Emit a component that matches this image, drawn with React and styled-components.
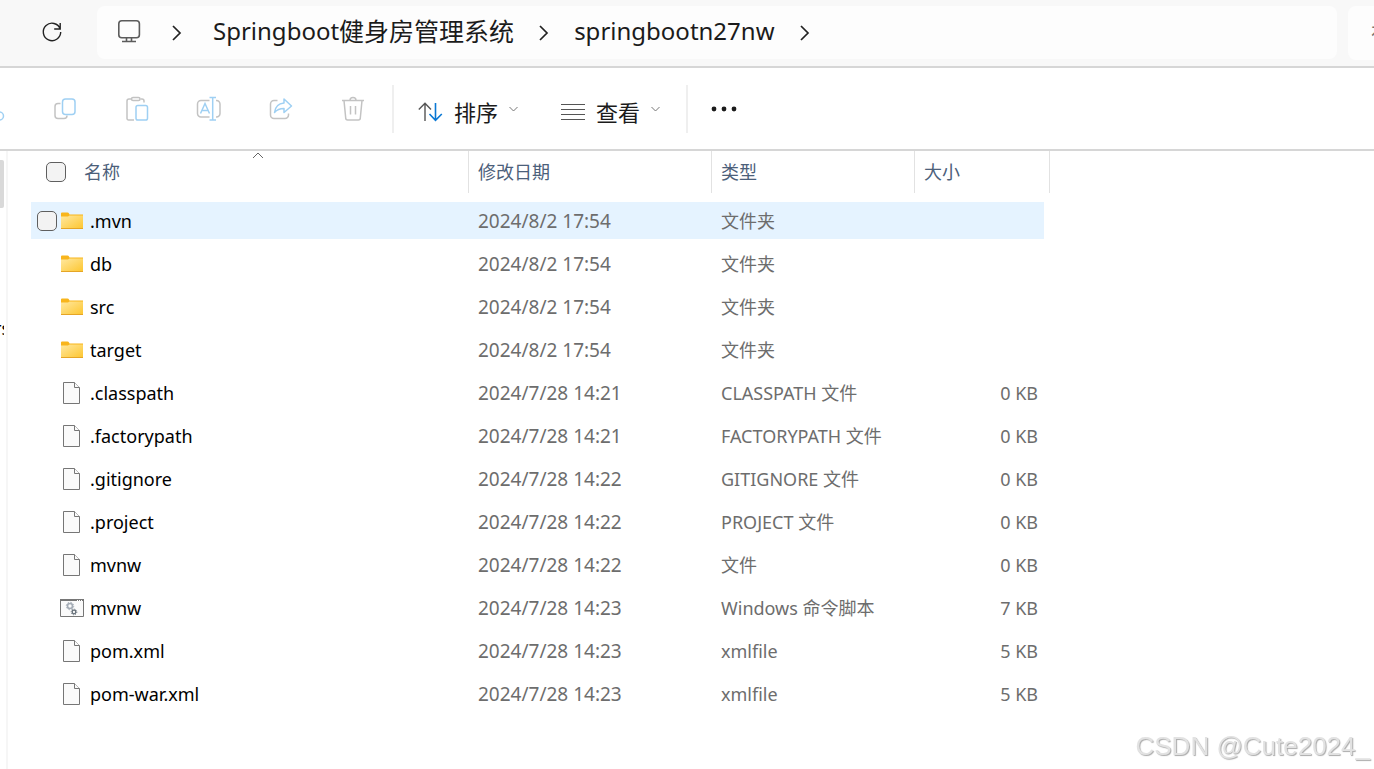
import React from "react";
import styled, { createGlobalStyle } from "styled-components";

const GlobalStyle = createGlobalStyle`
  *, *::before, *::after { box-sizing: border-box; }
  body {
    margin: 0;
    background: #fff;
    color: #1b1b1b;
    font-family: "Noto Sans", "Noto Sans CJK SC", sans-serif;
    overflow-x: hidden;
  }
  button, input { font: inherit; color: inherit; }
`;

const Window = styled.div`
  display: flex;
  flex-direction: column;
  min-height: 100vh;
  overflow: hidden;
`;

const AddressBar = styled.header`
  display: flex;
  align-items: flex-start;
  height: 68px;
  padding-top: 6px;
  background: #f8f8f8;
  border-bottom: 2px solid #d6d6d6;
`;

const PlainButton = styled.button`
  display: flex;
  align-items: center;
  justify-content: center;
  padding: 0;
  border: 0;
  background: none;
`;

const RefreshButton = styled(PlainButton)`
  width: 24px;
  height: 52px;
  margin: 0 33px 0 40px;
`;

const Breadcrumbs = styled.nav`
  display: flex;
  align-items: center;
  flex: 1;
  height: 53px;
  padding: 0 0 3px 20px;
  border-radius: 8px;
  background: #fdfdfd;
`;

const Crumb = styled.a`
  display: flex;
  align-items: center;
  color: #1b1b1b;
  font-size: 24px;
  line-height: 32px;
  text-decoration: none;
  white-space: nowrap;
`;

const CjkText = styled.span`
  font-size: 25px;
`;

const CrumbArrow = styled(PlainButton)`
  width: ${(p) => p.$width || "60px"};
  height: 40px;
  padding-top: 3px;
`;

const SearchBox = styled.input`
  width: 26px;
  height: 54px;
  margin-left: 11px;
  padding: 0 0 0 23px;
  border: 0;
  border-radius: 8px 0 0 8px;
  background: #fdfdfd;
  font-size: 20px;
`;

const Toolbar = styled.div`
  display: flex;
  align-items: center;
  height: 83px;
  border-bottom: 2px solid #d6d6d6;
`;

const IconButton = styled(PlainButton)`
  flex: none;
  width: 72px;
  height: 48px;
`;

const IconGroup = styled.div`
  display: flex;
  margin-left: -43px;
`;

const Divider = styled.span`
  width: 2px;
  height: 48px;
  margin-left: ${(p) => p.$gap};
  background: #efefef;
`;

const MenuButton = styled(PlainButton)`
  gap: 11px;
  height: 48px;
  margin-left: ${(p) => p.$gap};
  padding-top: 6px;
  font-size: 22px;
  line-height: 32px;
`;

const Body = styled.div`
  display: flex;
  flex: 1;
`;

const Sidebar = styled.aside`
  display: flex;
  flex-direction: column;
  flex: none;
  width: 8px;
  padding-top: 9px;
  border-right: 2px solid #f6f6f6;
  overflow: hidden;
`;

const ScrollThumb = styled.span`
  width: 4px;
  height: 48px;
  border-radius: 0 2px 2px 0;
  background: #d9d9d9;
`;

const TreeLabel = styled.span`
  display: flex;
  justify-content: center;
  width: 4px;
  margin-top: 108px;
  overflow: hidden;
  color: #000;
  font-size: 18px;
  line-height: 24px;
`;

const FileTable = styled.table`
  flex: none;
  align-self: flex-start;
  width: 1019px;
  margin-left: 23px;
  border-collapse: separate;
  border-spacing: 0;
  table-layout: fixed;
  text-align: left;
`;

const Column = styled.col`
  width: ${(p) => p.$width};
`;

const HeadCell = styled.th`
  height: 48px;
  padding: 0;
  vertical-align: top;
  color: #4c607a;
  font-size: 18px;
  font-weight: 400;
  line-height: 24px;
`;

const HeadContent = styled.div`
  position: relative;
  display: flex;
  align-items: center;
  gap: 18px;
  height: 42px;
  padding-left: ${(p) => p.$inset || "9px"};
  border-right: 1px solid #e2e2e2;
`;

const SortMark = styled.svg`
  position: absolute;
  top: 0;
  left: calc(50% + 2px);
`;

const Check = styled.input`
  appearance: none;
  flex: none;
  width: 20px;
  height: 20px;
  margin: 0;
  border: 1px solid #5f5f5f;
  border-radius: 5px;
  background: #f3f3f3;
`;

const Cell = styled.td`
  height: 43px;
  padding: 0 6px 0 9px;
  border: solid transparent;
  border-width: 3px 0;
  background: ${(p) => (p.$active ? "#e5f3ff" : "transparent")};
  background-clip: padding-box;
  color: #6d6d6d;
  font-size: ${(p) => p.$size || "18px"};
  line-height: 24px;
  text-align: ${(p) => (p.$end ? "right" : "left")};
  white-space: nowrap;
`;

const NameContent = styled.div`
  display: grid;
  grid-template-columns: 20px 24px 1fr;
  align-items: center;
  column-gap: 3px;
  margin-left: -3px;
  color: #000;
`;

const FileName = styled.label`
  grid-column: 3;
  margin-left: 3px;
`;

const IconSlot = styled.span`
  display: flex;
  grid-column: 2;
  justify-content: center;
`;

const Watermark = styled.div`
  position: fixed;
  right: 4px;
  bottom: 7px;
  color: #e2e2e2;
  font-family: "Liberation Sans", sans-serif;
  font-size: 26px;
  line-height: 32px;
  text-shadow: 1px 1px 1px #aaa;
`;

const Refresh = () => (
  <svg width="24" height="24" viewBox="0 0 24 24" fill="none" stroke="#222" strokeWidth="1.4">
    <path d="M20.2 9A8.7 8.7 0 1 0 20.7 12M20.2 3v6h-6" />
  </svg>
);

const Monitor = () => (
  <svg width="24" height="24" viewBox="0 0 24 24" fill="none" stroke="#5c5c5c" strokeWidth="1.6">
    <rect x="1.8" y="1.8" width="20.6" height="17" rx="3" />
    <path d="M9.5 19v3M14.5 19v3M5 22.5h14" />
  </svg>
);

const Chevron = () => (
  <svg width="12" height="18" viewBox="0 0 12 18" fill="none" stroke="#222" strokeWidth="1.7">
    <path d="M2 2l7 7-7 7" />
  </svg>
);

const SmallDown = () => (
  <svg width="9" height="14" viewBox="0 0 9 14" fill="none" stroke="#777">
    <path d="M.5 2l4 4 4-4" />
  </svg>
);

const ToolSvg = ({ children }) => (
  <svg width="28" height="28" viewBox="0 0 28 28" fill="none" stroke="#c3c3c3" strokeWidth="1.5">
    {children}
  </svg>
);

const blue = "#9fd0f3";

const Cut = () => (
  <ToolSvg>
    <circle cx="7" cy="21" r="4" stroke={blue} />
    <circle cx="20.5" cy="21" r="4" stroke={blue} />
    <path d="M18 18L9 2M10 18l9-16" />
  </ToolSvg>
);

const Copy = () => (
  <ToolSvg>
    <path d="M9.5 8.5H7a3 3 0 0 0-3 3v9a3 3 0 0 0 3 3h6a3 3 0 0 0 3-3" />
    <rect x="11.5" y="4" width="12.5" height="15.5" rx="3" stroke={blue} />
  </ToolSvg>
);

const Paste = () => (
  <ToolSvg>
    <path d="M8.5 4H6a2 2 0 0 0-2 2v17.5a1.5 1.5 0 0 0 1.5 1.5H11M17.5 4H19a2 2 0 0 1 2 2v1.5" />
    <rect x="8.5" y="2.5" width="8.5" height="3" rx="1.5" />
    <rect x="13" y="10.5" width="11.5" height="14.5" rx="1.8" stroke={blue} />
  </ToolSvg>
);

const Rename = () => (
  <ToolSvg>
    <path d="M14.5 5.5H6a3.5 3.5 0 0 0-3.5 3.5v9.5a3.5 3.5 0 0 0 3.5 3.5h8.5M21 5.5h.5a3.5 3.5 0 0 1 3.5 3.5v9.5a3.5 3.5 0 0 1-3.5 3.5H21" />
    <path stroke={blue} d="M5.5 18.5L10 8.5l4.500 10M7 15.5h6M17.7 2.5v22.5M14.500 2.5h6.5M14.5 25h6.5" />
  </ToolSvg>
);

const Share = () => (
  <ToolSvg>
    <path d="M10.5 5.500H7a3.5 3.5 0 0 0-3.5 3.5v11a3.5 3.5 0 0 0 3.5 3.5h11a3.5 3.5 0 0 0 3.5-3.5v-1.5" />
    <path stroke={blue} strokeLinejoin="round" d="M17 4l7.500 7-7.500 6.500v-4c-4 0-7 1-9.500 4 .7-5.500 4-9 9.500-9.500z" />
  </ToolSvg>
);

const Trash = () => (
  <ToolSvg>
    <path d="M3 5.5h22M5 5.5l1.700 17.500a2 2 0 0 0 2 2h10.600a2 2 0 0 0 2-2L23 5.500M11 5.5a3 3 0 0 1 6 0M11.5 11v8.5M16.5 11v8.5" />
  </ToolSvg>
);

const Sort = () => (
  <svg width="25" height="20" viewBox="0 0 25 20" fill="none" stroke="#555" strokeWidth="1.4">
    <path d="M7 19V1.500M.8 7.500L7 1.200l6 6.300" />
    <path stroke="#0a78d4" strokeWidth="1.6" d="M17.500 1v17M11.500 12l6 6.300 6.300-6.300" />
  </svg>
);

const Lines = () => (
  <svg width="24" height="18" viewBox="0 0 24 18" stroke="#555">
    <path d="M0 1.500h24M0 6.500h24M0 11.500h24M0 16.500h24" />
  </svg>
);

const Dots = () => (
  <svg width="26" height="6" viewBox="0 0 26 6" fill="#1b1b1b">
    <circle cx="3" cy="3" r="2.4" />
    <circle cx="13" cy="3" r="2.4" />
    <circle cx="23" cy="3" r="2.4" />
  </svg>
);

const FolderIcon = () => (
  <svg width="22" height="18" viewBox="0 0 22 18">
    <defs>
      <linearGradient id="folder" x1="0" y1="0" x2="1" y2="1">
        <stop offset="0" stopColor="#ffe8a0" />
        <stop offset="1" stopColor="#fdc630" />
      </linearGradient>
    </defs>
    <path fill="#f8b51c" d="M0 1.500Q0 .5 1 .5h5.500Q7.500.5 8 1.500l.5 1H22V6H0z" />
    <path fill="url(#folder)" d="M0 4.500h7l1.500-1H22v13H0z" />
    <path fill="#e5a526" d="M0 16h22v1H0z" />
  </svg>
);

const PageIcon = () => (
  <svg width="18" height="22" viewBox="0 0 18 22" fill="#fafafa" stroke="#767676">
    <path d="M.5.5h11l5 5v16H.5z" />
    <path d="M11.5.5v5h5" />
  </svg>
);

const ScriptIcon = () => (
  <svg width="24" height="18" viewBox="0 0 24 18" fill="none">
    <path fill="#fafafa" stroke="#767676" d="M.5.5h23v17H.5z" />
    <path fill="#767676" d="M0 0h24v2H0z" />
    <path stroke="#fff" strokeDasharray="1 1" d="M17 1.500h5" />
    <circle cx="10" cy="7" r="2.500" stroke="#a3abb5" strokeWidth="1.6" />
    <circle cx="10" cy="7" r="3.700" stroke="#a3abb5" strokeDasharray="1.45 1.45" />
    <circle cx="14" cy="13" r="1.800" stroke="#66707a" strokeWidth="1.3" />
    <circle cx="14" cy="13" r="2.800" stroke="#66707a" strokeDasharray="1.1 1.1" />
  </svg>
);

const icons = { folder: FolderIcon, page: PageIcon, script: ScriptIcon };

const files = [
  [".mvn", "2024/8/2 17:54", "文件夹", "", "folder"],
  ["db", "2024/8/2 17:54", "文件夹", "", "folder"],
  ["src", "2024/8/2 17:54", "文件夹", "", "folder"],
  ["target", "2024/8/2 17:54", "文件夹", "", "folder"],
  [".classpath", "2024/7/28 14:21", "CLASSPATH 文件", "0 KB", "page"],
  [".factorypath", "2024/7/28 14:21", "FACTORYPATH 文件", "0 KB", "page"],
  [".gitignore", "2024/7/28 14:22", "GITIGNORE 文件", "0 KB", "page"],
  [".project", "2024/7/28 14:22", "PROJECT 文件", "0 KB", "page"],
  ["mvnw", "2024/7/28 14:22", "文件", "0 KB", "page"],
  ["mvnw", "2024/7/28 14:23", "Windows 命令脚本", "7 KB", "script"],
  ["pom.xml", "2024/7/28 14:23", "xmlfile", "5 KB", "page"],
  ["pom-war.xml", "2024/7/28 14:23", "xmlfile", "5 KB", "page"],
];

function FileRow({ file, active }) {
  const [name, date, type, size, kind] = file;
  const Icon = icons[kind];
  return (
    <tr>
      <Cell $active={active}>
        <NameContent>
          {active && <Check type="checkbox" id="pick-active" />}
          <IconSlot><Icon /></IconSlot>
          <FileName htmlFor={active ? "pick-active" : undefined}>{name}</FileName>
        </NameContent>
      </Cell>
      <Cell $active={active} $size="19px">{date}</Cell>
      <Cell $active={active}>{type}</Cell>
      <Cell $active={active} $end>{size}</Cell>
    </tr>
  );
}

export default function App() {
  return (
    <Window>
      <GlobalStyle />
      <AddressBar>
        <RefreshButton aria-label="刷新"><Refresh /></RefreshButton>
        <Breadcrumbs>
          <Crumb href="#" aria-label="此电脑"><Monitor /></Crumb>
          <CrumbArrow $width="72px" aria-label="展开"><Chevron /></CrumbArrow>
          <Crumb href="#">Springboot<CjkText>健身房管理系统</CjkText></Crumb>
          <CrumbArrow aria-label="展开"><Chevron /></CrumbArrow>
          <Crumb href="#">springbootn27nw</Crumb>
          <CrumbArrow aria-label="展开"><Chevron /></CrumbArrow>
        </Breadcrumbs>
        <SearchBox aria-label="搜索" placeholder="在" />
      </AddressBar>
      <Toolbar>
        <IconGroup>
          <IconButton aria-label="剪切"><Cut /></IconButton>
          <IconButton aria-label="复制"><Copy /></IconButton>
          <IconButton aria-label="粘贴"><Paste /></IconButton>
          <IconButton aria-label="重命名"><Rename /></IconButton>
          <IconButton aria-label="共享"><Share /></IconButton>
          <IconButton aria-label="删除"><Trash /></IconButton>
        </IconGroup>
        <Divider $gap="3px" />
        <MenuButton $gap="24px"><Sort />排序<SmallDown /></MenuButton>
        <MenuButton $gap="43px"><Lines />查看<SmallDown /></MenuButton>
        <Divider $gap="26px" />
        <IconButton aria-label="更多"><Dots /></IconButton>
      </Toolbar>
      <Body>
        <Sidebar>
          <ScrollThumb />
          <TreeLabel>rs</TreeLabel>
        </Sidebar>
        <FileTable>
          <colgroup>
            <Column $width="438px" />
            <Column $width="243px" />
            <Column $width="203px" />
            <Column $width="129px" />
            <Column $width="6px" />
          </colgroup>
          <thead>
            <tr>
              <HeadCell>
                <HeadContent $inset="15px">
                  <Check type="checkbox" id="pick-all" />
                  <label htmlFor="pick-all">名称</label>
                  <SortMark width="12" height="8" viewBox="0 0 12 8" fill="none" stroke="#666">
                    <path d="M1 7l5-5 5 5" />
                  </SortMark>
                </HeadContent>
              </HeadCell>
              <HeadCell><HeadContent>修改日期</HeadContent></HeadCell>
              <HeadCell><HeadContent>类型</HeadContent></HeadCell>
              <HeadCell colSpan={2}><HeadContent>大小</HeadContent></HeadCell>
            </tr>
          </thead>
          <tbody>
            {files.map((file, i) => (
              <FileRow key={file[0] + file[4]} file={file} active={i === 0} />
            ))}
          </tbody>
        </FileTable>
      </Body>
      <Watermark>CSDN @Cute2024_</Watermark>
    </Window>
  );
}
